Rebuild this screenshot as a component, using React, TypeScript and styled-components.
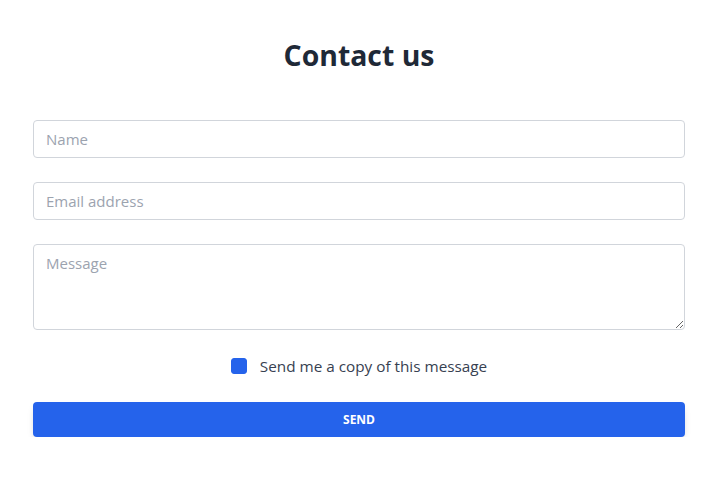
import React from 'react';
import styled, { createGlobalStyle } from 'styled-components';

const GlobalStyle = createGlobalStyle`
  body {
    margin: 0;
    background: #ffffff;
    font-family: "Open Sans", "Noto Sans", sans-serif;
  }
  * {
    box-sizing: border-box;
  }
`;

const Page = styled.div`
  padding: 37px 43px 0 33px;
`;

const Title = styled.h2`
  margin: 0 0 47px;
  text-align: center;
  font-size: 28.4px;
  line-height: 36px;
  font-weight: 700;
  color: #1f2937;
`;

const Form = styled.form`
  display: flex;
  flex-direction: column;
  gap: 24px;
`;

const Field = styled.input`
  display: block;
  width: 100%;
  height: 38px;
  padding: 6px 12px;
  border: 1px solid #d1d5db;
  border-radius: 4px;
  font-family: inherit;
  font-size: 15px;
  line-height: 24px;
  color: #374151;
  outline: none;
  &::placeholder {
    color: #9ca3af;
  }
`;

const Area = styled.textarea`
  display: block;
  width: 100%;
  height: 86px;
  padding: 6px 12px;
  border: 1px solid #d1d5db;
  border-radius: 4px;
  font-family: inherit;
  font-size: 15px;
  line-height: 24px;
  color: #374151;
  outline: none;
  resize: vertical;
  &::placeholder {
    color: #9ca3af;
  }
`;

const CheckRow = styled.label`
  display: flex;
  align-items: center;
  justify-content: center;
  gap: 13px;
  height: 24px;
  font-size: 15.3px;
  color: #374151;
  cursor: pointer;
`;

const Box = styled.span<{ $checked: boolean }>`
  width: 16px;
  height: 16px;
  border-radius: 3px;
  background: ${(p) => (p.$checked ? '#2563eb' : '#ffffff')};
  border: 1px solid ${(p) => (p.$checked ? '#2563eb' : '#d1d5db')};
`;

const SendButton = styled.button`
  width: 100%;
  height: 35px;
  border: none;
  border-radius: 4px;
  background: #2563eb;
  color: #ffffff;
  font-family: inherit;
  font-size: 12px;
  font-weight: 700;
  text-transform: uppercase;
  box-shadow: 0 4px 9px -4px rgba(0, 0, 0, 0.35);
  cursor: pointer;
`;

const App = () => {
  const [checked, setChecked] = React.useState(true);
  return (
    <Page>
      <GlobalStyle />
      <Title>Contact us</Title>
      <Form onSubmit={(e) => e.preventDefault()}>
        <Field type="text" placeholder="Name" />
        <Field type="email" placeholder="Email address" />
        <Area placeholder="Message" />
        <CheckRow onClick={() => setChecked(!checked)}>
          <Box $checked={checked} />
          Send me a copy of this message
        </CheckRow>
        <SendButton type="submit">Send</SendButton>
      </Form>
    </Page>
  );
};

export default App;
